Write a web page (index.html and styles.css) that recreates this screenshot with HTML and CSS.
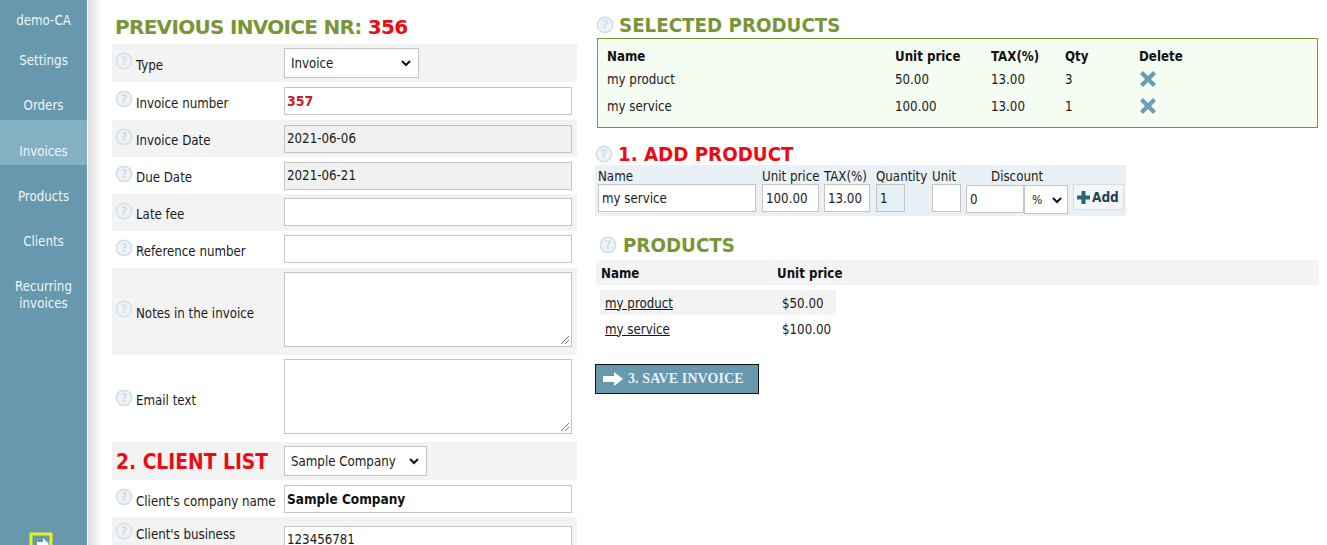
FILE: index.html
```html
<!DOCTYPE html>
<html lang="en">
<head>
<meta charset="utf-8">
<title>Invoices</title>
<link rel="stylesheet" href="styles.css">
</head>
<body>
<svg class="defs" width="0" height="0" aria-hidden="true"><defs>
<symbol id="help" viewBox="0 0 18 18"><circle cx="9" cy="9" r="7.6" fill="#eef3f7" stroke="#d3e0ea" stroke-width="1.6"/><text x="9" y="13" text-anchor="middle" class="qm">?</text></symbol>
<symbol id="del" viewBox="0 0 18 18"><path d="M4 1l5 5 5-5 3 3-5 5 5 5-3 3-5-5-5 5-3-3 5-5-5-5z" fill="#6b9db3"/></symbol>
</defs></svg>
<div class="app">
  <nav class="sidebar">
    <a class="nav-user">demo-CA</a>
    <a class="nav-item">Settings</a>
    <a class="nav-item">Orders</a>
    <a class="nav-item active">Invoices</a>
    <a class="nav-item">Products</a>
    <a class="nav-item">Clients</a>
    <a class="nav-item">Recurring invoices</a>
    <svg class="logout" width="24" height="24" viewBox="0 0 24 24"><path d="M2 2h20v20H2z" fill="none" stroke="#e6f21c" stroke-width="3"/><path d="M8 10h6V6l6 6-6 6v-4H8z" fill="#fff"/></svg>
  </nav>
  <div class="shadow"></div>
  <main class="content">
    <section class="left">
      <h1 class="title green">PREVIOUS INVOICE NR: <span class="red">356</span></h1>
      <div class="row grey h38"><svg class="help"><use href="#help"/></svg><label>Type</label><div class="select sel-type">Invoice<svg class="chev" viewBox="0 0 12 8"><path d="M2 2l4 4 4-4" fill="none" stroke="#111" stroke-width="2"/></svg></div></div>
      <div class="row h38"><svg class="help"><use href="#help"/></svg><label>Invoice number</label><div class="input strong-red">357</div></div>
      <div class="row grey h37"><svg class="help"><use href="#help"/></svg><label>Invoice Date</label><div class="input ro">2021-06-06</div></div>
      <div class="row h37"><svg class="help"><use href="#help"/></svg><label>Due Date</label><div class="input ro">2021-06-21</div></div>
      <div class="row grey h37 nudge"><svg class="help"><use href="#help"/></svg><label>Late fee</label><div class="input"></div></div>
      <div class="row h37 nudge"><svg class="help"><use href="#help"/></svg><label>Reference number</label><div class="input"></div></div>
      <div class="row grey area-row notes"><svg class="help"><use href="#help"/></svg><label>Notes in the invoice</label><div class="input area"><svg class="grip" viewBox="0 0 10 10"><path d="M1 9l8-8M5 9l4-4" stroke="#777" fill="none"/></svg></div></div>
      <div class="row area-row email"><svg class="help"><use href="#help"/></svg><label>Email text</label><div class="input area"><svg class="grip" viewBox="0 0 10 10"><path d="M1 9l8-8M5 9l4-4" stroke="#777" fill="none"/></svg></div></div>
      <div class="row grey h38 client-head"><h2 class="title-sm red">2. CLIENT LIST</h2><div class="select sel-client">Sample Company<svg class="chev" viewBox="0 0 12 8"><path d="M2 2l4 4 4-4" fill="none" stroke="#111" stroke-width="2"/></svg></div></div>
      <div class="row h37"><svg class="help"><use href="#help"/></svg><label>Client's company name</label><div class="input bold">Sample Company</div></div>
      <div class="row grey biz"><svg class="help"><use href="#help"/></svg><label>Client's business<br>number</label><div class="input">123456781</div></div>
    </section>
    <section class="right">
      <div class="head sel-head"><svg class="help"><use href="#help"/></svg><h2 class="title-sm green">SELECTED PRODUCTS</h2></div>
      <div class="selected">
        <div class="sel-row sel-th"><span>Name</span><span>Unit price</span><span>TAX(%)</span><span>Qty</span><span>Delete</span></div>
        <div class="sel-row"><span>my product</span><span>50.00</span><span>13.00</span><span>3</span><svg class="del"><use href="#del"/></svg></div>
        <div class="sel-row"><span>my service</span><span>100.00</span><span>13.00</span><span>1</span><svg class="del"><use href="#del"/></svg></div>
      </div>
      <div class="head add-head"><svg class="help"><use href="#help"/></svg><h2 class="title-sm red">1. ADD PRODUCT</h2></div>
      <div class="addform">
        <div class="f f-name"><span>Name</span><div class="box">my service</div></div>
        <div class="f f-price"><span>Unit price</span><div class="box">100.00</div></div>
        <div class="f f-tax"><span>TAX(%)</span><div class="box">13.00</div></div>
        <div class="f f-qty"><span>Quantity</span><div class="box qty">1</div></div>
        <div class="f f-unit"><span>Unit</span><div class="box"></div></div>
        <div class="f f-disc"><span>Discount</span><div class="disc"><div class="box d-val">0</div><div class="box d-sel">%<svg class="chev" viewBox="0 0 12 8"><path d="M2 2l4 4 4-4" fill="none" stroke="#111" stroke-width="2"/></svg></div></div></div>
        <button class="add" type="button"><svg width="13" height="13" viewBox="0 0 13 13"><path d="M4.5 0h4v4.5H13v4H8.500V13h-4V8.500H0v-4h4.500z" fill="#2f6475"/></svg>Add</button>
      </div>
      <div class="head prod-head"><svg class="help"><use href="#help"/></svg><h2 class="title-sm green">PRODUCTS</h2></div>
      <div class="prod-th"><span class="pc1">Name</span><span>Unit price</span></div>
      <div class="prod-row shade"><a class="pc2">my product</a><span>$50.00</span></div>
      <div class="prod-row"><a class="pc2">my service</a><span>$100.00</span></div>
      <button class="save" type="button"><svg width="20" height="14" viewBox="0 0 20 14"><path d="M0 4h11V0l9 7-9 7v-4H0z" fill="#fff"/></svg>3. SAVE INVOICE</button>
    </section>
  </main>
</div>
</body>
</html>
```
FILE: styles.css
```css
* { box-sizing: border-box; }
html, body { margin: 0; height: 100%; overflow: hidden; background: #fff; }
body { font-family: "DejaVu Sans Condensed", "DejaVu Sans", sans-serif; font-size: 13.200px; color: #1a1a1a; }
.defs { position: absolute; }
.qm { font: bold 12px "DejaVu Sans", sans-serif; fill: #d3e0ea; }
.app { display: flex; height: 545px; overflow: hidden; }
.sidebar { position: relative; width: 87px; flex: none; background: #6798ad; color: #eef5f8; display: flex; flex-direction: column; text-align: center; }
.nav-user { height: 29px; padding-top: 12px; line-height: 17px; }
.nav-item { height: 45.300px; padding-top: 23px; line-height: 17px; }
.nav-item.active { background: #84b0c4; }
.logout { position: absolute; left: 29px; top: 532px; }
.shadow { width: 14px; flex: none; margin-left: 1px; background: linear-gradient(to right, #dcdcdc, #fff); }
.content { display: flex; flex: 1; min-width: 0; align-items: flex-start; padding-left: 10px; }
.left { width: 465px; flex: none; padding-top: 14px; }
.right { width: 724px; flex: none; margin-left: 18px; padding-top: 12px; }
.title { margin: 0 0 0 3px; height: 30px; font-size: 20px; line-height: 26px; font-family: "DejaVu Sans", sans-serif; font-weight: bold; letter-spacing: -0.700px; }
.title-sm { margin: 0; font-size: 20.300px; line-height: 24px; font-family: "DejaVu Sans Condensed", sans-serif; font-weight: bold; }
.green { color: #7a9537; }
.red { color: #ee0a12; }
.row { display: flex; align-items: center; position: relative; padding-left: 24px; }
.row label { width: 148px; flex: none; padding-top: 3px; }
.h38 label, .notes label, .email label, .client-head + .row label { padding-top: 5px; }
.row > .help { position: absolute; left: 3px; top: 7.500px; }
.help { width: 18px; height: 18px; flex: none; }
.grey { background: #f3f3f3; }
.h38 { height: 38px; }
.h37 { height: 37px; }
.nudge .input { margin-bottom: 2px; }
.area-row { height: 86.500px; }
.area-row.notes > .help { top: 32px; }
.area-row.email > .help { top: 34px; }
.notes .input { margin-bottom: 4px; }
.email .input { margin-bottom: 2px; }
.input { width: 288px; height: 28px; flex: none; background: #fff; border: 1px solid #c4c4c4; padding: 0 2px; line-height: 26px; }
.ro { background: #f1f1f1; }
.strong-red { color: #c8202a; font-weight: bold; font-size: 14px; }
.bold { font-weight: bold; color: #111; font-size: 13.500px; }
.area { height: 75px; position: relative; }
.grip { position: absolute; right: 1px; bottom: 1px; width: 10px; height: 10px; }
.select { height: 30px; background: #fff; border: 1px solid #c4c4c4; display: flex; align-items: center; justify-content: space-between; padding: 0 6px; }
.sel-type { width: 135px; }
.sel-client { width: 143px; }
.chev { width: 12px; height: 8px; flex: none; }
.client-head { padding-left: 4px; margin-top: 1px; }
.client-head .title-sm { width: 168px; flex: none; font-size: 20.800px; padding-top: 2px; }
.biz { height: 60px; align-items: flex-start; padding-top: 9px; }
.biz label { line-height: 17px; padding-top: 0; }
.biz > .help { top: 5px; }
.head { display: flex; align-items: center; gap: 5px; }
.sel-head { height: 26px; margin-left: 1px; }
.selected { width: 721px; height: 90px; margin-left: 2px; background: #f5fcf2; border: 1px solid #7a9537; padding: 4px 9px; }
.sel-row { display: grid; grid-template-columns: 288px 96px 74px 74px 1fr; height: 27px; align-items: center; }
.sel-th { height: 23px; padding-top: 3px; font-weight: bold; color: #111; }
.del { width: 18px; height: 18px; margin-top: -1px; }
.add-head { margin-top: 14px; height: 24px; }
.addform { display: flex; width: 531px; height: 51px; margin-top: -1px; background: #e9f1f6; padding: 3px 2px 0 3px; }
.f { display: flex; flex-direction: column; }
.f span { height: 16px; line-height: 18px; white-space: nowrap; }
.box { height: 28px; background: #fff; border: 1px solid #c4c4c4; padding: 0 3px; line-height: 28px; }
.f-name { width: 164px; }
.f-name .box { width: 158px; }
.f-price { width: 62px; }
.f-price .box { width: 57px; }
.f-tax { width: 52px; }
.f-tax .box { width: 46px; }
.f-qty { width: 56px; }
.f-qty .box { width: 29px; }
.qty { background: #e6eef6; }
.f-unit { width: 34px; }
.f-unit .box { width: 29px; }
.f-disc { width: 107px; }
.f-disc span { padding-left: 25px; }
.disc { display: flex; margin-top: 1px; }
.d-val { width: 58px; }
.d-sel { width: 44px; height: 29px; display: flex; align-items: center; justify-content: space-between; padding: 0 4px 0 7px; font-size: 12px; }
.add { margin: 16px 0 0 0; width: 51px; height: 26px; background: #f3f7f9; border: 1px solid #d5dde2; padding: 0 0 0 3px; display: flex; align-items: center; gap: 2px; font: bold 13.500px "DejaVu Sans Condensed", sans-serif; color: #22424e; }
.prod-head { margin: 15px 0 0 4px; height: 29px; padding-bottom: 2px; gap: 6px; }
.prod-th { display: flex; height: 25px; padding-top: 1px; align-items: center; background: #f3f3f3; font-weight: bold; color: #111; margin-left: 1px; width: 723px; padding-left: 5px; }
.pc1 { width: 176px; }
.prod-row { display: flex; align-items: center; height: 25px; width: 236px; margin: 0 0 1px 5px; padding: 1px 0 0 5px; }
.prod-th + .prod-row { margin-top: 5px; }
.shade { background: #f3f3f3; }
.pc2 { width: 177px; text-decoration: underline; color: #1a1a1a; }
.save { margin-top: 23px; width: 164px; height: 30px; background: #6798ad; border: 1px solid #111; color: #e8f1f5; display: flex; align-items: center; gap: 5px; padding: 0 0 0 7px; font: bold 14px "Liberation Serif", serif; letter-spacing: 0.100px; }
```
